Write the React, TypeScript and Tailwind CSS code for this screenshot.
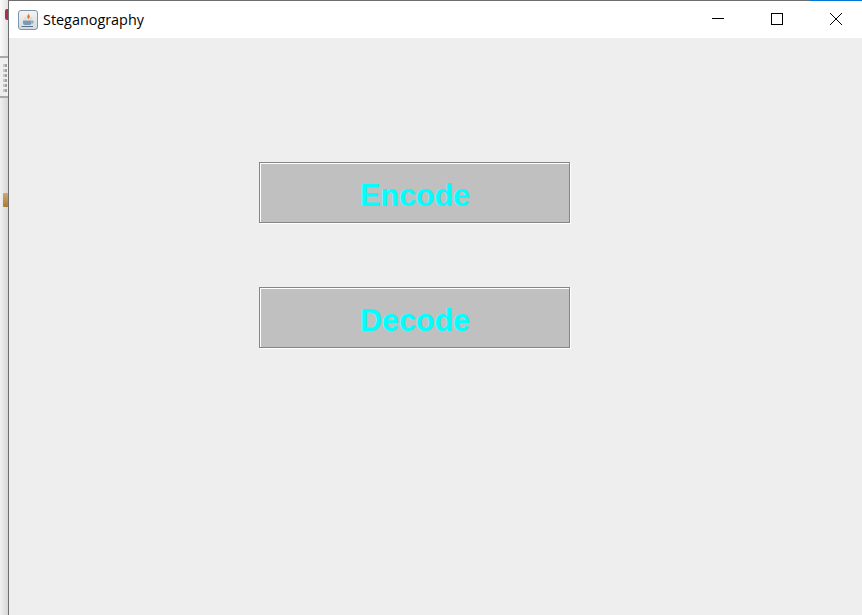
function JavaIcon() {
  return (
    <svg width="20" height="20" viewBox="0 0 20 20" className="shrink-0">
      <defs>
        <linearGradient id="tile" x1="0" y1="0" x2="0" y2="1">
          <stop offset="0" stopColor="#f4f4f2" />
          <stop offset="1" stopColor="#d5d9dd" />
        </linearGradient>
      </defs>
      <rect x="0.5" y="0.5" width="19" height="19" rx="2.5" fill="url(#tile)" stroke="#7d95ab" />
      <path d="M10.500 2.500c1.200 1.600-1.800 2.800-1.200 5 .2.800.8 1.300 1.100 1.900.5-1.300 2.100-2 1.200-3.700-.5-.9-1-1.600-1.100-3.200z" fill="#dd7a32" />
      <path d="M7.500 7.500c-1 .8-.6 1.500.2 2M13 7.500c.8.700.3 1.400-.5 1.900" fill="none" stroke="#e9b27e" strokeWidth="0.8" />
      <path d="M5 10.500h8.500v2.500c0 1-.8 2-1.800 2H6.800c-1 0-1.800-1-1.800-2z" fill="#7d99b3" />
      <path d="M13.500 11h1.500v2h-1.500" fill="none" stroke="#7d99b3" />
      <path d="M3.500 16.500h11.500" stroke="#56768f" />
    </svg>
  );
}

function ActionButton({ label }: { label: string }) {
  return (
    <button
      type="button"
      className="flex h-[61px] w-[311px] items-center justify-center border border-[#858585] bg-[#c0c0c0] pl-[1px] pt-[6px] font-['Liberation_Sans',Arial,sans-serif] text-[30.5px] font-bold text-[#00ffff] shadow-[inset_1px_1px_0_#ffffff,1px_1px_0_#ffffff]"
    >
      {label}
    </button>
  );
}

export default function App() {
  return (
    <div className="flex h-[615px] w-[862px] overflow-hidden bg-[#eeeeee] font-['Open_Sans','Noto_Sans',sans-serif]">
      {/* what shows of the window behind */}
      <div className="relative w-2 shrink-0 bg-gradient-to-r from-[#f1f1f1] to-[#d6d6d6]">
        <div className="h-[56px] bg-gradient-to-r from-[#fbfbfb] to-[#e2e2e2]" />
        <div className="h-[42px] border-y-2 border-y-[#a9a9a9] bg-[#efefef]" />
        <div className="absolute left-[3px] top-[63px] h-[30px] w-[2px] bg-[radial-gradient(#c4c4c4_45%,transparent_50%)] bg-[length:2px_5px]" />
        <div className="absolute left-[5px] top-[63px] h-[30px] w-[2px] bg-[radial-gradient(#a0a0a0_45%,transparent_50%)] bg-[length:2px_5px]" />
        <div className="absolute left-[3px] top-[193px] h-[14px] w-[5px] rounded-l-[1px] bg-gradient-to-b from-[#d6a868] to-[#a97a35]" />
        <div className="absolute left-[5px] top-[9px] h-[11px] w-[3px] rounded-l-[2px] bg-[#a8324a]" />
      </div>

      <div className="flex min-w-0 flex-1 flex-col border-l border-l-[#6e6e6e]">
        <header className="flex h-[38px] shrink-0 items-center border-t border-t-[#6f6f6f] bg-white pl-[9px]">
          <JavaIcon />
          <span className="ml-[5px] text-[14.4px] text-black">Steganography</span>
          <div className="ml-auto flex -translate-y-px items-center">
            <svg width="12" height="12" viewBox="0 0 12 12" className="mr-[47px]">
              <path d="M0 5.500h12" stroke="#000" />
            </svg>
            <svg width="12" height="12" viewBox="0 0 12 12" className="mr-[47px]">
              <rect x="0.500" y="0.500" width="11" height="11" fill="none" stroke="#000" />
            </svg>
            <svg width="12" height="12" viewBox="0 0 12 12" className="mr-[20px]">
              <path d="M0 0l12 12M12 0L0 12" stroke="#000" />
            </svg>
          </div>
        </header>

        <main className="flex flex-1 flex-col gap-[64px] pl-[250px] pt-[124px]">
          <ActionButton label="Encode" />
          <ActionButton label="Decode" />
        </main>
      </div>

      <div className="fixed right-0 top-0 h-px w-[52px] bg-[#0078d7]" />
    </div>
  );
}
